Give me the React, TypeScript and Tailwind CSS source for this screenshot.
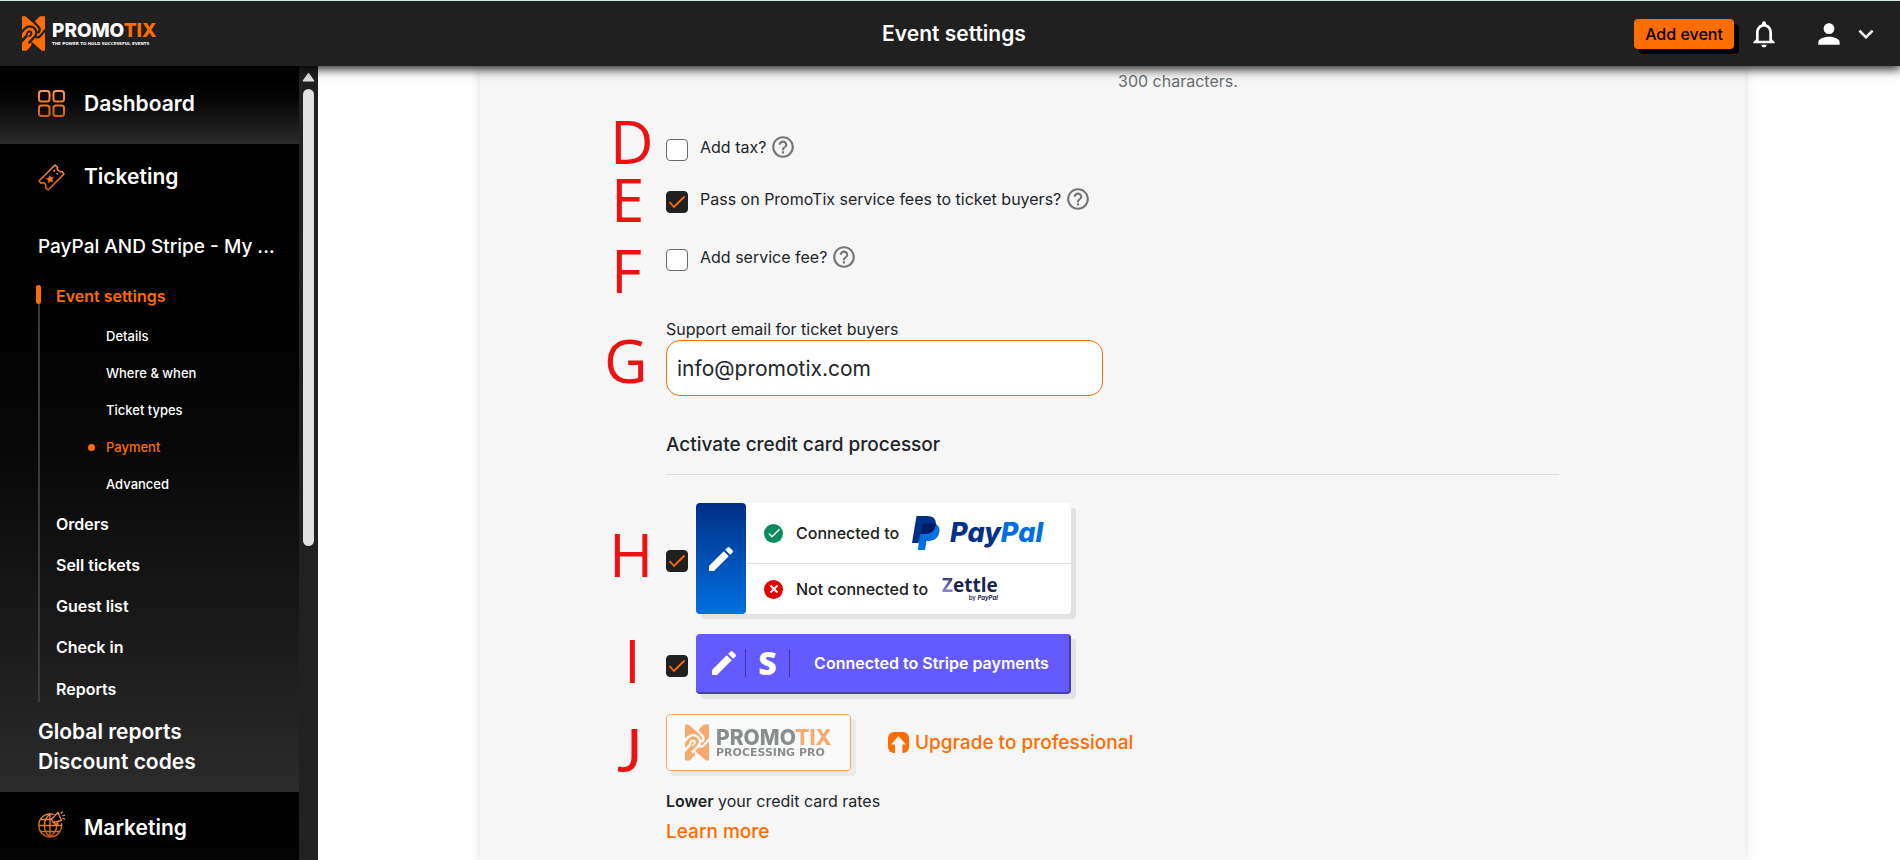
import { useId, type ReactNode } from 'react';
import { MdCheck, MdEdit, MdExpandMore, MdHelpOutline, MdNotificationsNone, MdPerson } from 'react-icons/md';

function BrandMark({ className, gap }: { className: string; gap: string }) {
  return (
    <svg viewBox="0 0 69 104" className={className} aria-hidden="true">
      <path d="M0 0H10L41 27L40 14L54 0H69V104H60L28 76V88L14 104H0Z" fill="#ff6c00" />
      <g fill="none" stroke={gap}>
        <path d="M-3 50L8 38C17 28 31 29 38 37C45 45 44 55 38 62L20 81" strokeWidth="7" />
        <path d="M-3 77L15 58" strokeWidth="8" />
        <path d="M15 58C13 50 20 43 27 48C31 53 26 59 20 60" strokeWidth="6" />
        <path d="M38 20L50 33C55 39 53 45 48 50M72 40L54 60C49 66 44 64 40 60" strokeWidth="7" />
      </g>
    </svg>
  );
}

function IconGradient({ id }: { id: string }) {
  return (
    <linearGradient id={id} x1="0" y1="0" x2="0" y2="27" gradientUnits="userSpaceOnUse">
      <stop offset="0" stopColor="#ff9a55" />
      <stop offset="1" stopColor="#d95b00" />
    </linearGradient>
  );
}

function DashboardIcon() {
  return (
    <svg viewBox="0 0 27 27" className="size-[27px]" fill="none" stroke="url(#dash)" strokeWidth="2" aria-hidden="true">
      <defs><IconGradient id="dash" /></defs>
      <rect x="1" y="1" width="10.5" height="10.5" rx="2.5" />
      <rect x="15.5" y="1" width="10.5" height="10.5" rx="2.5" />
      <rect x="1" y="15.5" width="10.5" height="10.5" rx="2.5" />
      <rect x="15.5" y="15.5" width="10.5" height="10.5" rx="2.5" />
    </svg>
  );
}

function TicketIcon() {
  return (
    <svg viewBox="0 0 27 27" className="size-[27px]" fill="none" stroke="url(#tick)" strokeWidth="1.5" strokeLinejoin="round" aria-hidden="true">
      <defs><IconGradient id="tick" /></defs>
      <path d="M1 17L17 1L19.500 3.200C18.500 5.500 21 8.500 24 7.500L26 10L10 26L7.500 23.500C9 20.500 6 17.500 3 19.300Z" />
      <path d="M15.500 6L17 7.500M18.500 9L20 10.500" />
      <path d="M11.500 11.200L13 13.500L15.800 13.300L14.200 15.600L15.200 18.200L12.500 17.400L10.300 19L10.300 16.300L8 14.700L10.700 13.800Z" fill="url(#tick)" strokeWidth="0.300" />
    </svg>
  );
}

function GlobeIcon() {
  return (
    <svg viewBox="0 0 27 27" className="size-[27px]" fill="none" stroke="url(#globe)" strokeWidth="1.300" strokeLinejoin="round" aria-hidden="true">
      <defs><IconGradient id="globe" /></defs>
      <path d="M16 3.500A11.500 11.500 0 1 0 23.500 12" />
      <path d="M12 3V26M1 14.500H24M3 8.500H13M3 20.500H22M12 3C4.500 9 4.500 20 12 26C19 20.500 19.500 15 18 12" />
      <path d="M13.500 8L20 1.500L23.500 9.500L15 11.500ZM15.500 11.500L18 14.500L20 13L19 10.800" />
      <path d="M23 2.500L24.500 0.500M24.300 5L27 4M24.500 7.300L27 8" />
    </svg>
  );
}

function PayPalMark() {
  return (
    <svg viewBox="0 0 28 34" className="h-[34px] w-7" aria-hidden="true">
      <path d="M8.500 7H22C27 9 28.500 13 27 17.500C25.500 23 21 25 16 25H14.500L13 34H6Z" fill="#0070e0" />
      <path d="M4.500 0H15C22 0 25 4 23.500 10C22 15.500 18 18 12.500 18H8.500L6.500 27H0Z" fill="#003087" />
      <path d="M10.500 8.500C12 7 16 6.500 23.700 7.500C23.500 14.500 19 18 12.500 18H8.500Z" fill="#001c64" />
    </svg>
  );
}

function UpgradeIcon() {
  return (
    <svg viewBox="0 0 21 21" className="size-[21px]" aria-hidden="true">
      <rect width="21" height="21" rx="6" fill="#ff6c00" />
      <path d="M10.500 4L18 12.500H14.500V21H7V12.500H3Z" fill="#f6f6f6" />
    </svg>
  );
}

const markerBase = 'pointer-events-none absolute select-none text-[60px] leading-none text-[#ee1111] ';

function Marker({ letter, className }: { letter: string; className: string }) {
  return <span className={markerBase + className}>{letter}</span>;
}

function Tick({ id, checked, label }: { id: string; checked?: boolean; label?: string }) {
  return (
    <span className="grid size-[22px] shrink-0 place-items-center">
      <input
        id={id}
        type="checkbox"
        defaultChecked={checked}
        aria-label={label}
        className="peer col-start-1 row-start-1 size-[22px] appearance-none rounded border border-[#6b6b6b] bg-white checked:border-[#202020] checked:bg-[#202020]"
      />
      <svg viewBox="0 0 18 14" className="pointer-events-none col-start-1 row-start-1 hidden h-[14px] w-[18px] peer-checked:block" fill="none" stroke="#ff6c00" strokeWidth="1.800" aria-hidden="true">
        <path d="M1.500 7L6 12L16.500 1.500" />
      </svg>
    </span>
  );
}

function Option({ label, checked, marker }: { label: string; checked?: boolean; marker: ReactNode }) {
  const id = useId();
  return (
    <div className="relative flex h-[26px] items-start">
      {marker}
      <span className="pt-[5px]"><Tick id={id} checked={checked} /></span>
      <label htmlFor={id} className="ml-3 pt-px text-base leading-6">{label}</label>
      <button type="button" aria-label={'Help: ' + label} className="ml-1 text-[#757575]">
        <MdHelpOutline className="size-[26px]" />
      </button>
    </div>
  );
}

const details = ['Details', 'Where & when', 'Ticket types', 'Payment', 'Advanced'];
const sections = ['Orders', 'Sell tickets', 'Guest list', 'Check in', 'Reports'];

function Sidebar() {
  return (
    <aside className="flex w-[318px] shrink-0 bg-[#212121] text-white">
      <nav className="flex min-w-0 flex-1 flex-col">
        <a href="#dashboard" className="flex h-[78px] shrink-0 items-center gap-[19px] bg-linear-to-b from-black to-[#2b2b2b] pb-[3px] pl-[38px] text-[21px] font-semibold">
          <DashboardIcon />
          Dashboard
        </a>
        <div className="flex h-[648px] shrink-0 flex-col bg-linear-to-b from-black to-[#2b2b2b] pl-[38px]">
          <a href="#ticketing" className="flex h-[66px] shrink-0 items-center gap-[19px] text-[21px] font-semibold">
            <TicketIcon />
            Ticketing
          </a>
          <p className="mr-4 h-[62px] truncate pt-[23px] text-[19px] leading-7 font-medium">PayPal AND Stripe - My ...</p>
          <div className="mt-[13px] flex">
            <div className="flex w-[18px] flex-col">
              <span className="-ml-0.5 h-[19px] w-[5px] rounded-full bg-[#ff6c00]" />
              <span className="w-0.5 flex-1 bg-[#3b3b3b]" />
            </div>
            <ul className="text-base font-semibold">
              <li className="h-[33px] leading-[22px] text-[#ff6c00]"><a href="#settings">Event settings</a></li>
              {details.map((item) => (
                <li key={item} className="flex h-[37px] items-center text-[13px] font-medium">
                  <span className={item === 'Payment' ? 'mr-[11px] ml-8 size-[7px] rounded-full bg-[#ff6c00]' : 'w-[50px]'} />
                  <a href="#detail" className={item === 'Payment' ? 'text-[#ff6c00]' : ''}>{item}</a>
                </li>
              ))}
              {sections.map((item) => (
                <li key={item} className="flex h-[41px] items-center last:h-[35px] last:pt-2"><a href="#section">{item}</a></li>
              ))}
            </ul>
          </div>
          <div className="mt-[15px] flex flex-col text-[21px] leading-[30px] font-semibold">
            <a href="#reports">Global reports</a>
            <a href="#codes">Discount codes</a>
          </div>
        </div>
        <a href="#marketing" className="flex min-h-[68px] flex-1 items-start gap-[19px] bg-linear-to-b from-black to-[#050505] pt-[19px] pl-[38px] text-[21px] font-semibold">
          <GlobeIcon />
          <span className="leading-[34px]">Marketing</span>
        </a>
      </nav>
      <div className="flex w-[19px] flex-col items-center pt-1.5" aria-hidden="true">
        <svg viewBox="0 0 13 10" className="h-2.5 w-[13px]"><path d="M6.500 1L12 9H1Z" fill="#e1e1e1" stroke="#e1e1e1" strokeLinejoin="round" /></svg>
        <div className="mt-[7px] h-[58%] w-[11px] rounded-full bg-[#e1e1e1]" />
      </div>
    </aside>
  );
}

function Header() {
  return (
    <header className="relative z-10 grid h-[66px] shrink-0 grid-cols-[1fr_auto_1fr] items-center border-t border-[#d3e6ea] bg-[#202020] text-white shadow-[0_2px_10px_1px_rgba(0,0,0,0.9)]">
      <a href="#home" className="flex items-center gap-[7px] pl-[22px]">
        <BrandMark className="h-[35px] w-[23px]" gap="#202020" />
        <span className="flex flex-col">
          <span className="text-[19px] leading-5 font-extrabold">PROMO<span className="text-[#ff6c00]">TIX</span></span>
          <span className="font-['DejaVu_Sans',sans-serif] text-[4px] leading-[5px] font-bold whitespace-nowrap">THE POWER TO HOLD SUCCESSFUL EVENTS</span>
        </span>
      </a>
      <h1 className="pt-px pl-2 text-[21px] font-semibold">Event settings</h1>
      <div className="flex items-center justify-end pr-[19px]">
        <button type="button" className="mr-[14px] h-[30px] w-[100px] rounded bg-[#ff6c00] text-base leading-[30px] font-medium text-black shadow-[5px_5px_0_#000]">Add event</button>
        <button type="button" aria-label="Notifications"><MdNotificationsNone className="size-8" /></button>
        <button type="button" aria-label="Account" className="ml-[33px] flex items-center gap-1.5">
          <MdPerson className="size-8" />
          <MdExpandMore className="size-[30px]" />
        </button>
      </div>
    </header>
  );
}

function Processors() {
  return (
    <>
      <div className="relative mt-7 flex items-center gap-2">
        <Marker letter="H" className="top-[21px] -left-[57px] font-['Open_Sans',sans-serif]" />
        <span className="pt-1"><Tick id="paypal" checked label="Use PayPal" /></span>
        <div className="flex h-[111px] w-[375px] rounded bg-white shadow-[5px_5px_0_#e2e2e2]">
          <button type="button" aria-label="Edit PayPal" className="grid w-[50px] place-items-center rounded bg-linear-to-b from-[#003087] to-[#0070e0] text-white">
            <MdEdit className="size-8" />
          </button>
          <div className="flex flex-1 flex-col text-base font-medium text-[#202020]">
            <div className="flex h-[61px] items-center border-b border-[#e0e0e0] pl-[18px]">
              <span className="grid size-[19px] place-items-center rounded-full bg-[#0a8a5f] text-white"><MdCheck className="size-4" /></span>
              <span className="ml-[13px]">Connected to</span>
              <span className="ml-[13px]"><PayPalMark /></span>
              <span className="ml-2.5 text-[27px] leading-8 font-extrabold text-[#003087] italic">Pay<span className="text-[#0070e0]">Pal</span></span>
            </div>
            <div className="flex flex-1 items-center pl-[18px]">
              <span className="grid size-[19px] place-items-center rounded-full bg-[#e30000]">
                <svg viewBox="0 0 10 10" className="size-2.5" stroke="#fff" strokeWidth="2" aria-hidden="true"><path d="M1.500 1.500L8.500 8.500M8.500 1.500L1.500 8.500" /></svg>
              </span>
              <span className="ml-[13px]">Not connected to</span>
              <span className="ml-3.5 flex flex-col text-[#1b2350]">
                <span className="font-['Open_Sans',sans-serif] text-[19px] leading-[18px] font-bold"><span className="bg-linear-to-b from-[#1b2350] to-[#b6a5ff] bg-clip-text text-transparent">Z</span>ettle</span>
                <span className="text-right text-[6px] leading-2">by <b className="italic">PayPal</b></span>
              </span>
            </div>
          </div>
        </div>
      </div>
      <div className="relative mt-5 flex items-center gap-2">
        <Marker letter="I" className="-top-1 -left-[42px] font-['Open_Sans',sans-serif]" />
        <span className="pt-1"><Tick id="stripe" checked label="Use Stripe" /></span>
        <button type="button" className="flex h-[60px] w-[375px] items-center rounded border-r-2 border-b-2 border-[#443db3] bg-[#635bff] pl-3 text-base font-semibold text-white shadow-[5px_5px_0_#e2e2e2]">
          <MdEdit className="size-8" />
          <span className="ml-[5px] grid h-7 w-[45px] place-items-center border-x border-[#3d3a94] font-['Noto_Sans',sans-serif] text-[32px] leading-7 font-black">S</span>
          <span className="flex-1 pl-1 text-center">Connected to Stripe payments</span>
        </button>
      </div>
      <div className="relative mt-5 flex items-center">
        <Marker letter="J" className="top-[5px] -left-[49px] font-['Lato',sans-serif]" />
        <button type="button" disabled className="flex h-[57px] w-[185px] items-center gap-[7px] rounded border border-[#ff6c00] bg-white pl-[18px] opacity-55 shadow-[5px_5px_0_#e2e2e2]">
          <BrandMark className="h-[37px] w-6" gap="#ffffff" />
          <span className="flex flex-col text-left text-[#303838]">
            <span className="text-[21px] leading-5 font-extrabold">PROMO<span className="text-[#ff6c00]">TIX</span></span>
            <span className="font-['DejaVu_Sans',sans-serif] text-[11px] leading-[10px] font-bold whitespace-nowrap">PROCESSING PRO</span>
          </span>
        </button>
        <a href="#upgrade" className="ml-[37px] flex items-center gap-1.5 text-[19px] leading-7 font-medium text-[#ff6c00]">
          <UpgradeIcon />
          Upgrade to professional
        </a>
      </div>
    </>
  );
}

export default function App() {
  return (
    <div className="flex h-screen flex-col overflow-hidden bg-white font-['Inter','Open_Sans',sans-serif] text-[#212529]">
      <Header />
      <div className="flex min-h-0 flex-1">
        <Sidebar />
        <main className="min-w-0 flex-1 overflow-hidden pr-[155px] pl-[162px]">
          <section className="min-h-full bg-[#f6f6f6] px-[186px] shadow-[0_0_10px_rgba(0,0,0,0.15)]">
            <p className="ml-[452px] pt-[3px] text-base leading-6 text-[#666c70]">300 characters.</p>
            <div className="mt-[41px] flex flex-col">
              <Option label="Add tax?" marker={<Marker letter="D" className="-top-[23px] -left-[56px] font-['Open_Sans',sans-serif]" />} />
              <div className="mt-[26px]">
                <Option checked label="Pass on PromoTix service fees to ticket buyers?" marker={<Marker letter="E" className="-top-[17px] -left-[55px] font-['Open_Sans',sans-serif]" />} />
              </div>
              <div className="mt-8">
                <Option label="Add service fee?" marker={<Marker letter="F" className="-top-[4px] -left-[55px] font-['Open_Sans',sans-serif]" />} />
              </div>
            </div>
            <div className="relative mt-12 flex flex-col">
              <Marker letter="G" className="top-3 -left-[62px] font-['Open_Sans',sans-serif]" />
              <label htmlFor="email" className="text-base leading-[22px]">Support email for ticket buyers</label>
              <input id="email" type="email" defaultValue="info@promotix.com" className="h-14 w-[437px] rounded-[14px] border border-[#ff6c00] bg-white px-2.5 text-[21px] outline-none" />
            </div>
            <h2 className="mt-9 border-b border-[#dcdcdc] pb-4 text-[19px] leading-[26px] font-medium">Activate credit card processor</h2>
            <Processors />
            <p className="mt-[18px] text-base leading-6"><b className="font-semibold">Lower</b> your credit card rates</p>
            <a href="#learn" className="mt-[5px] inline-block text-[19px] leading-7 font-medium text-[#ff6c00]">Learn more</a>
          </section>
        </main>
      </div>
    </div>
  );
}
